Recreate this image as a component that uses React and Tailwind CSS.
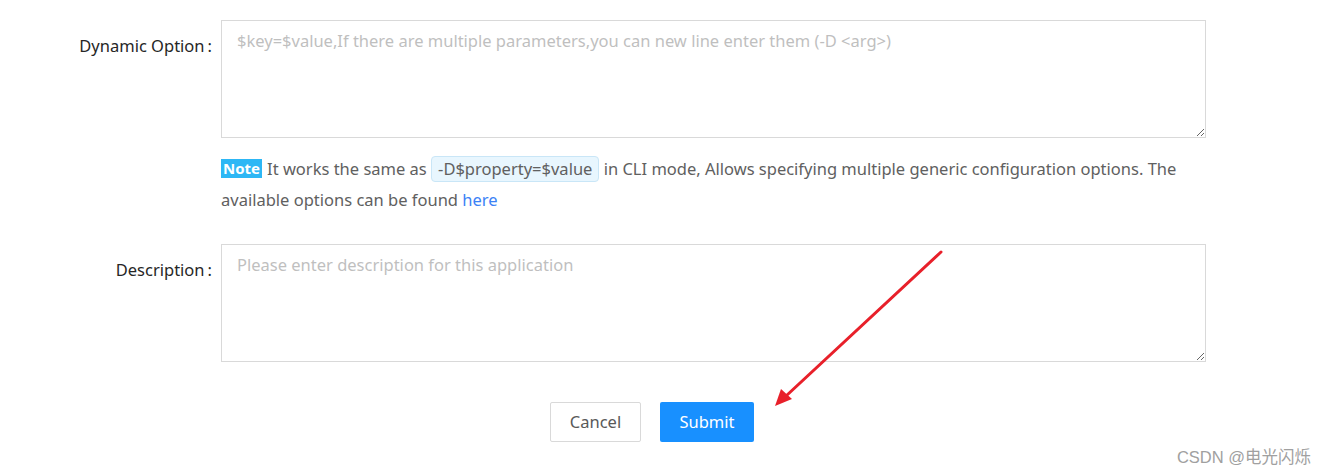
import React from "react";

const font = { fontFamily: '"Noto Sans", "Noto Sans CJK SC", sans-serif' };

function Label({ children }) {
  return (
    <div className="w-[221px] shrink-0 flex justify-end pr-[9px] pt-[15px] text-[16.5px] leading-[22px] text-[#262626]">
      <span>{children}</span>
      <span className="ml-[3px]">:</span>
    </div>
  );
}

function Area({ placeholder }) {
  return (
    <textarea
      placeholder={placeholder}
      className="w-[985px] h-[118px] border border-[#d9d9d9] bg-white px-[15px] py-[8px] text-[16.5px] leading-[24px] text-[#262626] placeholder:text-[#bfbfbf] outline-none"
    />
  );
}

export default function App() {
  return (
    <div className="relative w-[1326px] h-[475px] bg-white overflow-hidden" style={font}>
      <div className="pt-[20px]">
        <div className="flex">
          <Label>Dynamic Option</Label>
          <Area placeholder="$key=$value,If there are multiple parameters,you can new line enter them (-D <arg>)" />
        </div>
        <div className="ml-[221px] w-[985px] mt-[15px] text-[16.5px] leading-[31px] text-[#606060]">
          <span className="inline-block bg-[#2db7f5] text-white font-bold text-[15px] leading-[19px] px-[2px] mr-[5px] align-[1px]">Note</span>
          It works the same as{" "}
          <span className="inline-block bg-[#e8f6fe] border border-[#c9e6f7] rounded-[4px] px-[6px] leading-[24px] text-[#606060]">-D$property=$value</span>{" "}
          in CLI mode, Allows specifying multiple generic configuration options. The available options can be found{" "}
          <a className="text-[#3b82f6]">here</a>
        </div>
        <div className="flex mt-[29px]">
          <Label>Description</Label>
          <Area placeholder="Please enter description for this application" />
        </div>
        <div className="flex mt-[40px] ml-[550px] gap-[19px]">
          <button className="w-[91px] h-[40px] border border-[#d9d9d9] rounded-[2px] bg-white text-[16.5px] text-[#595959]">Cancel</button>
          <button className="w-[94px] h-[40px] rounded-[2px] bg-[#1890ff] text-[16.5px] text-white">Submit</button>
        </div>
      </div>
      <svg className="absolute left-0 top-0 pointer-events-none" width="1326" height="475">
        <line x1="941" y1="252" x2="786" y2="396" stroke="#e8202a" strokeWidth="3" strokeLinecap="round" />
        <polygon points="775,406 781,389 792,399" fill="#e8202a" />
      </svg>
      <div className="absolute right-[15px] bottom-[5px] text-[16.5px] text-[#a0a0a0]" style={{ fontFamily: '"Liberation Sans", "Noto Sans CJK SC", sans-serif' }}>
        CSDN @电光闪烁
      </div>
    </div>
  );
}
